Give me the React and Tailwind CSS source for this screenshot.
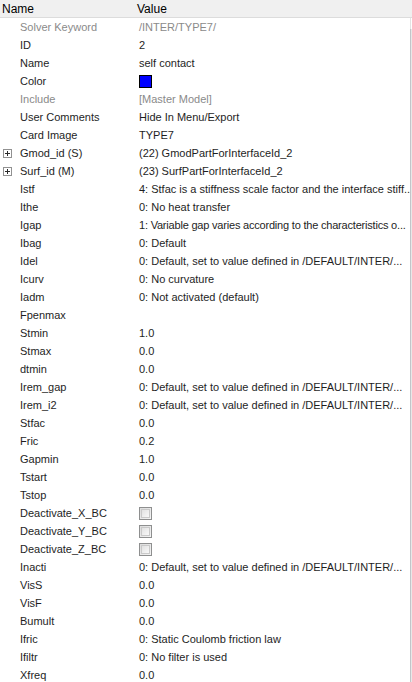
import React from 'react';

const rows = [
  { name: 'Solver Keyword', value: '/INTER/TYPE7/', muted: true },
  { name: 'ID', value: '2' },
  { name: 'Name', value: 'self contact' },
  { name: 'Color', type: 'color' },
  { name: 'Include', value: '[Master Model]', muted: true },
  { name: 'User Comments', value: 'Hide In Menu/Export' },
  { name: 'Card Image', value: 'TYPE7' },
  { name: 'Gmod_id (S)', value: '(22) GmodPartForInterfaceId_2', expand: true },
  { name: 'Surf_id (M)', value: '(23) SurfPartForInterfaceId_2', expand: true },
  { name: 'Istf', value: '4: Stfac is a stiffness scale factor and the interface stiff...' },
  { name: 'Ithe', value: '0: No heat transfer' },
  { name: 'Igap', value: '1: Variable gap varies according to the characteristics o...', tight: true },
  { name: 'Ibag', value: '0: Default' },
  { name: 'Idel', value: '0: Default, set to value defined in /DEFAULT/INTER/...' },
  { name: 'Icurv', value: '0: No curvature' },
  { name: 'Iadm', value: '0: Not activated (default)' },
  { name: 'Fpenmax', value: '' },
  { name: 'Stmin', value: '1.0' },
  { name: 'Stmax', value: '0.0' },
  { name: 'dtmin', value: '0.0' },
  { name: 'Irem_gap', value: '0: Default, set to value defined in /DEFAULT/INTER/...' },
  { name: 'Irem_i2', value: '0: Default, set to value defined in /DEFAULT/INTER/...' },
  { name: 'Stfac', value: '0.0' },
  { name: 'Fric', value: '0.2' },
  { name: 'Gapmin', value: '1.0' },
  { name: 'Tstart', value: '0.0' },
  { name: 'Tstop', value: '0.0' },
  { name: 'Deactivate_X_BC', type: 'check' },
  { name: 'Deactivate_Y_BC', type: 'check' },
  { name: 'Deactivate_Z_BC', type: 'check' },
  { name: 'Inacti', value: '0: Default, set to value defined in /DEFAULT/INTER/...' },
  { name: 'VisS', value: '0.0' },
  { name: 'VisF', value: '0.0' },
  { name: 'Bumult', value: '0.0' },
  { name: 'Ifric', value: '0: Static Coulomb friction law' },
  { name: 'Ifiltr', value: '0: No filter is used' },
  { name: 'Xfreq', value: '0.0' },
];

const PlusBox = () => (
  <div className="w-[9px] h-[9px] border border-[#919191] bg-white flex items-center justify-center">
    <svg width="7" height="7" viewBox="0 0 7 7">
      <path d="M1 3.5h5M3.5 1v5" stroke="#2b2b2b" strokeWidth="1" shapeRendering="crispEdges" />
    </svg>
  </div>
);

const Checkbox = () => (
  <div className="w-[13px] h-[13px] border border-[#8e8f8f] bg-gradient-to-br from-[#dcdcdc] to-[#f4f4f4] p-px">
    <div className="w-full h-full border border-[#c9c9c9] bg-gradient-to-br from-[#e2e2e2] to-[#f8f8f8]" />
  </div>
);

const Row = ({ row }) => {
  const color = row.muted ? 'text-[#8a8a8a]' : 'text-[#1e1e1e]';
  return (
    <div className={`flex h-[18px] items-center ${color}`}>
      <div className="w-[20px] flex justify-start pl-[3px]">{row.expand && <PlusBox />}</div>
      <div className="w-[119px] whitespace-nowrap">{row.name}</div>
      <div className="flex-1 min-w-0 pr-[2px]">
        {row.type === 'color' && <div className="w-[13px] h-[13px] border border-black bg-[#0000ff]" />}
        {row.type === 'check' && <Checkbox />}
        {!row.type && (
          <div className={row.tight ? 'whitespace-nowrap tracking-[-0.2px]' : 'whitespace-nowrap'}>
            {row.value}
          </div>
        )}
      </div>
    </div>
  );
};

const App = () => {
  return (
    <div
      className="w-[412px] h-[682px] overflow-hidden bg-white text-[11px] leading-[18px]"
      style={{ fontFamily: '"Liberation Sans", Arial, sans-serif' }}
    >
      {/* Header */}
      <div className="flex h-[18px] items-center bg-[#f0f0f0] border-b border-[#dcdcdc] text-[12px] text-black">
        <div className="w-[137px] pl-[2px]">Name</div>
        <div className="flex-1">Value</div>
      </div>

      <div className="flex">
        <div className="flex-1 min-w-0">
          {rows.map((row) => (
            <Row key={row.name} row={row} />
          ))}
        </div>
        {/* Scrollbar edge */}
        <div className="w-[2px] flex flex-col">
          <div className="h-[11px] border-l border-[#e3e3e3]" />
          <div className="flex-1 border-l border-[#c2c5c9] bg-[#e8e8e8]" />
        </div>
      </div>
    </div>
  );
};

export default App;
